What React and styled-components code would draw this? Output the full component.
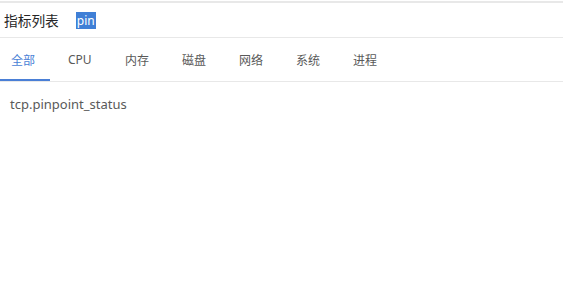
import React, { useState } from "react";
import styled, { createGlobalStyle } from "styled-components";

const GlobalStyle = createGlobalStyle`
  html, body {
    margin: 0;
    padding: 0;
    background: #fff;
    font-family: "Noto Sans", "Noto Sans CJK SC", sans-serif;
  }
`;

const tabs = ["全部", "CPU", "内存", "磁盘", "网络", "系统", "进程"];

export default function App() {
  const [active, setActive] = useState(0);
  return (
    <Page>
      <GlobalStyle />
      <Header>
        <Title>指标列表</Title>
        <Search>pin</Search>
      </Header>
      <TabBar>
        {tabs.map((t, i) => (
          <Tab key={t} active={i === active} onClick={() => setActive(i)}>
            {t}
          </Tab>
        ))}
      </TabBar>
      <List>
        <Item>tcp.pinpoint_status</Item>
      </List>
    </Page>
  );
}

//---------------------------STYLES-------------------------------------------//

const Page = styled.div`
  width: 563px;
  margin-top: 1px;
  border-top: 2px solid #e8e8e8;
`;

const Header = styled.div`
  height: 34px;
  display: flex;
  align-items: center;
  padding-left: 4px;
  border-bottom: 1px solid #e8e8e8;
`;

const Title = styled.div`
  font-size: 13.7px;
  color: #262626;
`;

const Search = styled.span`
  margin-left: 17px;
  padding: 0 1px;
  height: 17px;
  line-height: 17px;
  font-size: 12px;
  color: #fff;
  background: #3f7fd6;
`;

const TabBar = styled.div`
  height: 43px;
  display: flex;
  gap: 7px;
  border-bottom: 1px solid #e8e8e8;
`;

const Tab = styled.div`
  width: 50px;
  box-sizing: border-box;
  padding: 2px 0 0 11px;
  display: flex;
  align-items: center;
  white-space: nowrap;
  font-size: 12px;
  color: ${(p) => (p.active ? "#4a7fd6" : "#595959")};
  border-bottom: 2px solid ${(p) => (p.active ? "#4a7fd6" : "transparent")};
  cursor: pointer;
`;

const List = styled.div`
  padding: 13px 10px;
`;

const Item = styled.div`
  font-size: 13px;
  color: #595959;
`;
